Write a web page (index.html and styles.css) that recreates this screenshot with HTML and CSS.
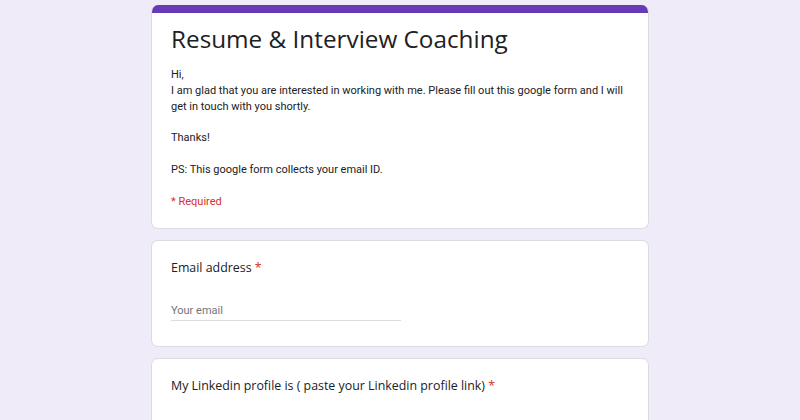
FILE: index.html
```html
<!DOCTYPE html>
<html>
<head>
<meta charset="utf-8">
<link rel="stylesheet" href="styles.css">
</head>
<body>
<div class="form">
  <div class="card header">
    <div class="bar"></div>
    <div class="header-body">
      <h1 class="title">Resume &amp; Interview Coaching</h1>
      <div class="desc">Hi,<br>I am glad that you are interested in working with me. Please fill out this google form and I will get in touch with you shortly.<br><br>Thanks!<br><br>PS: This google form collects your email ID.</div>
      <div class="required">* Required</div>
    </div>
  </div>
  <div class="card question">
    <div class="label">Email address <span class="star">*</span></div>
    <div class="input">Your email</div>
  </div>
  <div class="card question">
    <div class="label">My Linkedin profile is ( paste your Linkedin profile link) <span class="star">*</span></div>
    <div class="input empty"></div>
  </div>
</div>
</body>
</html>
```
FILE: styles.css
```css
html, body { margin: 0; padding: 0; }
body {
  background: #f0ebf8;
  font-family: Roboto, "Liberation Sans", sans-serif;
  color: #202124;
}
.form {
  width: 498px;
  margin: 0 auto;
  padding-top: 5px;
  display: flex;
  flex-direction: column;
  gap: 11px;
}
.card {
  background: #fff;
  border: 1px solid #dadce0;
  border-radius: 7px;
  overflow: hidden;
}
.header { border-top: none; }
.bar { height: 8px; background: #673ab7; }
.header-body { padding: 8px 19px 18px; }
.title {
  margin: 0;
  font-family: "Open Sans", Roboto, sans-serif;
  font-weight: 400;
  font-size: 24.3px;
  line-height: 36px;
  letter-spacing: 0;
  color: #202124;
}
.desc {
  margin-top: 10px;
  font-size: 11px;
  line-height: 15.8px;
  color: #202124;
}
.required {
  margin-top: 16px;
  font-size: 11px;
  line-height: 16px;
  color: #d93025;
}
.question { padding: 17px 19px 25px; }
.label {
  font-family: "Open Sans", Roboto, sans-serif;
  font-size: 12.4px;
  line-height: 20px;
  color: #202124;
}
.star { color: #d93025; }
.input {
  margin-top: 25px;
  width: 230px;
  font-size: 11px;
  line-height: 16px;
  color: #70757a;
  padding-bottom: 1px;
  border-bottom: 1px solid #dadce0;
}
.input.empty { height: 16px; }
```
